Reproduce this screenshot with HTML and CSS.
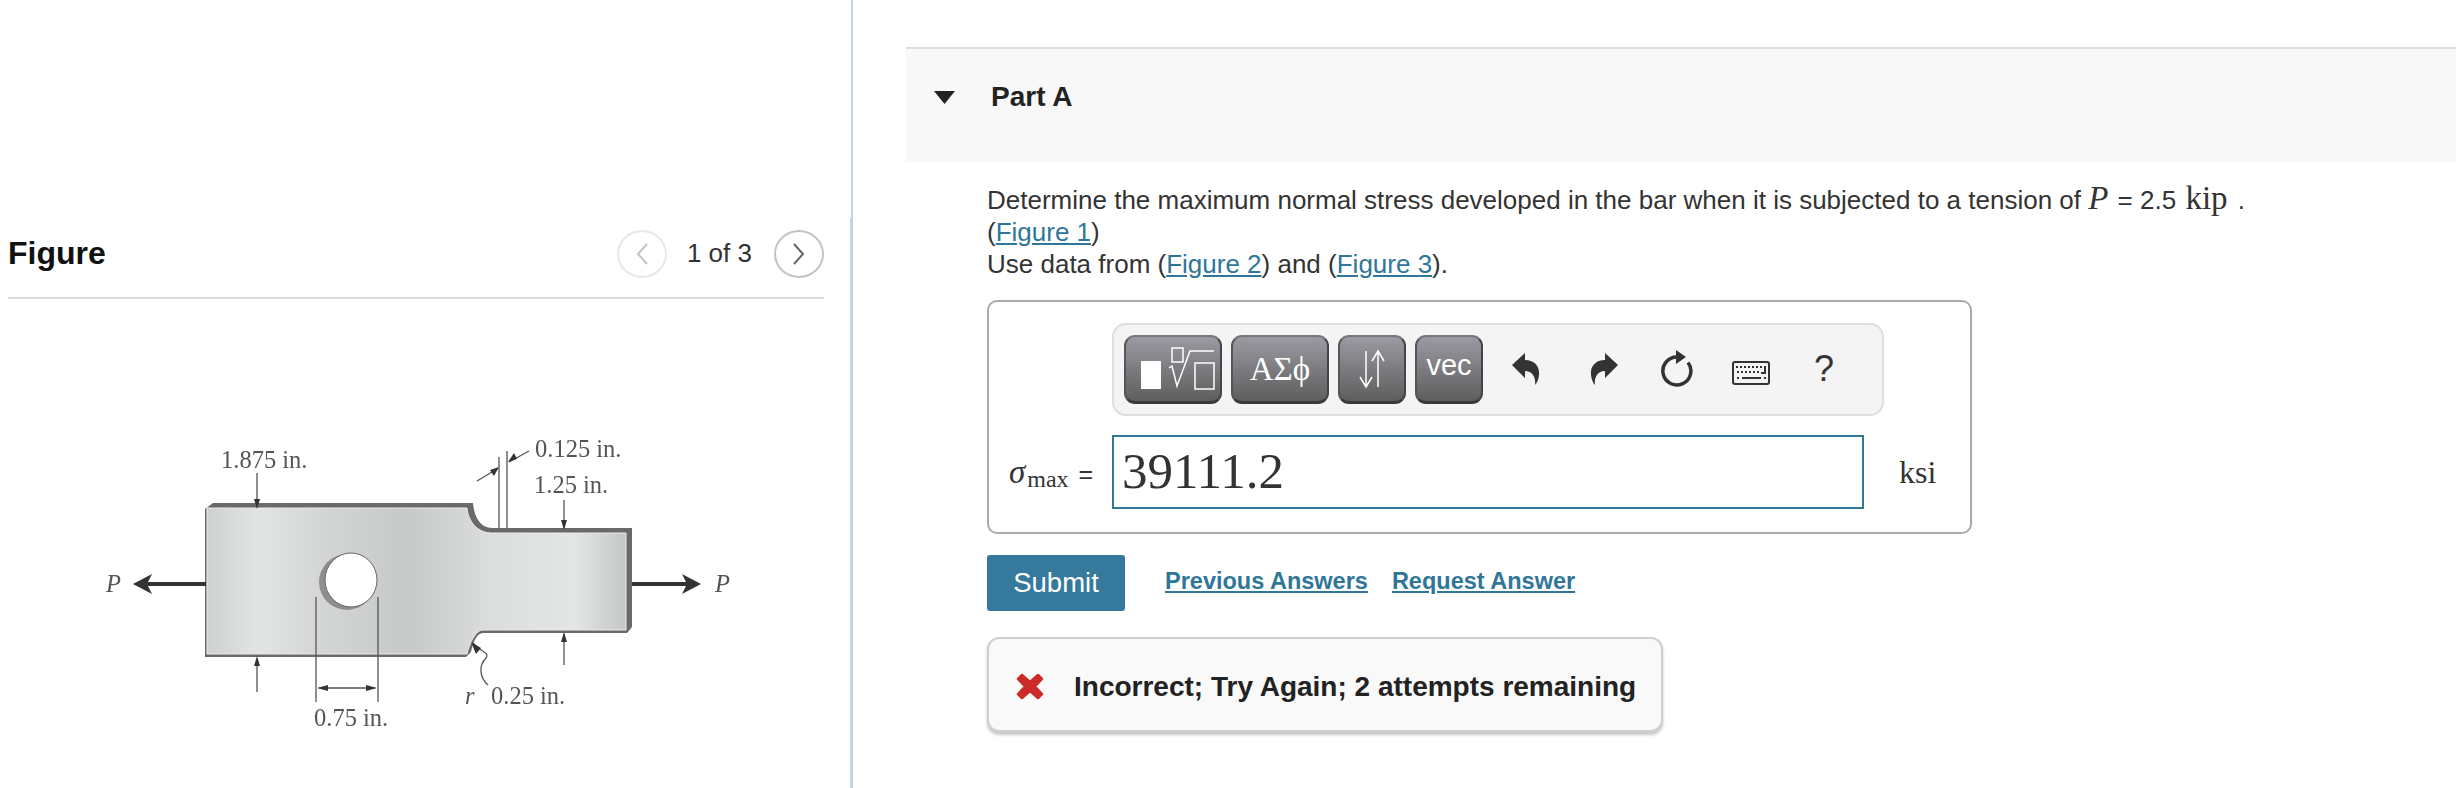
FILE: index.html
```html
<!DOCTYPE html>
<html lang="en">
<head>
<meta charset="utf-8">
<title>Part A</title>
<link rel="stylesheet" href="styles.css">
</head>
<body>
<div class="page">
  <section class="figure-pane">
    <header class="figure-head">
      <h2 class="figure-title">Figure</h2>
      <div class="pager">
        <span class="pager-btn pager-off"><svg width="14" height="24" viewBox="0 0 14 24"><path d="M12 2 L3 12 L12 22" fill="none" stroke="#c4c4c4" stroke-width="2"/></svg></span>
        <span class="pager-count">1 of 3</span>
        <span class="pager-btn"><svg width="14" height="24" viewBox="0 0 14 24"><path d="M2 2 L11 12 L2 22" fill="none" stroke="#666" stroke-width="2"/></svg></span>
      </div>
    </header>
    <svg class="diagram" width="700" height="340" viewBox="0 0 700 340">
      <defs>
        <linearGradient id="steel" x1="0" x2="1" y1="0" y2="0">
          <stop offset="0" stop-color="#cfd1d1"/>
          <stop offset=".12" stop-color="#e2e4e4"/>
          <stop offset=".3" stop-color="#d2d4d4"/>
          <stop offset=".48" stop-color="#c6c8c9"/>
          <stop offset=".68" stop-color="#dcdede"/>
          <stop offset=".88" stop-color="#e4e5e5"/>
          <stop offset="1" stop-color="#c4c6c6"/>
        </linearGradient>
      </defs>
      <path d="M133 83 H393 C394 96 400 108 412 108 H552 V207 L547 213 H403 C397 213 393 222 391 232 L386 237 H125 V89 Z" fill="#6a6a6a"/>
      <path d="M127 88 H387 C388 100 396 113 412 113 H546 V210 H403 C396 210 390 222 387 234 H127 Z" fill="url(#steel)" stroke="#ececec" stroke-width="1"/>
      <ellipse cx="267" cy="162" rx="28" ry="28" fill="#8e8e8e"/>
      <ellipse cx="271" cy="160" rx="26" ry="27" fill="#fff" stroke="#666" stroke-width="1"/>
      <g class="dim">
        <path d="M177 53 V87 M177 272 V240 M484 80 V108 M484 245 V214"/>
        <path d="M419 37 V108 M427 31 V108 M397 61 L417 49 M449 31 L429 42"/>
        <path d="M236 177 V282 M298 177 V282 M239 268 H295"/>
        <path d="M393 223 C400 232 410 232 406 238 C398 246 400 258 408 265"/>
      </g>
      <g class="tips">
        <path d="M177 89 L174 79 H180 Z M177 236 L174 246 H180 Z M484 110 L481 100 H487 Z M484 212 L481 222 H487 Z"/>
        <path d="M419 47 L410 50 L414 56 Z M428 42 L437 39 L434 33 Z"/>
        <path d="M237 268 L248 265 V271 Z M297 268 L286 265 V271 Z M391 222 L401 228 L396 234 Z"/>
        <path d="M53 164 L72 154 L68 162 H126 V166 H68 L72 174 Z"/>
        <path d="M621 164 L602 154 L606 162 H552 V166 H606 L602 174 Z"/>
      </g>
      <text class="dia-label" x="141" y="48">1.875 in.</text>
      <text class="dia-label" x="455" y="37">0.125 in.</text>
      <text class="dia-label" x="454" y="73">1.25 in.</text>
      <text class="dia-label dia-italic" x="26" y="172">P</text>
      <text class="dia-label dia-italic" x="635" y="172">P</text>
      <text class="dia-label dia-italic" x="385" y="284">r</text>
      <text class="dia-label" x="411" y="284">0.25 in.</text>
      <text class="dia-label" x="234" y="306">0.75 in.</text>
    </svg>
  </section>

  <div class="divider"><div class="divider-thin"></div><div class="divider-thick"></div></div>

  <main class="part-pane">
    <header class="part-head">
      <svg class="caret" width="21" height="13" viewBox="0 0 21 13"><path d="M0 0 H21 L10.5 13 Z" fill="#222"/></svg>
      <h3 class="part-title">Part A</h3>
    </header>
    <div class="part-body">
      <p class="prompt">Determine the maximum normal stress developed in the bar when it is subjected to a tension of <span class="m-var">P</span> = 2.5 <span class="m-unit">kip</span> .<br>
      (<a href="#">Figure 1</a>)<br>
      Use data from (<a href="#">Figure 2</a>) and (<a href="#">Figure 3</a>).</p>

      <div class="answer-box">
        <div class="toolbar">
          <div class="tool-group">
            <span class="tool tool-wide tool-math">
              <svg width="74" height="46" viewBox="0 0 74 46"><rect x="0" y="15" width="20" height="28" fill="#fff"/><g fill="none" stroke="#fff" stroke-width="1.5"><rect x="31" y="2" width="11" height="14"/><path d="M28 22 L31 20 L36 40 L49 5 H73"/><rect x="54" y="17" width="19" height="26"/></g></svg>
            </span>
            <span class="tool tool-wide tool-greek">ΑΣϕ</span>
            <span class="tool tool-mid">
              <svg width="30" height="40" viewBox="0 0 30 40"><g fill="none" stroke="#fff" stroke-width="1.5"><path d="M9 2 V38 M3 28 L9 38 L15 28"/><path d="M21 38 V2 M15 12 L21 2 L27 12"/></g></svg>
            </span>
            <span class="tool tool-mid tool-vec">vec</span>
          </div>
          <div class="tool-actions">
            <svg class="act" width="28" height="32" viewBox="0 0 28 32"><path d="M0 12 L13 0 V7 C22 7 28 13 27 22 C26.6 26 25 30 23 32 C24 25 21 18 13 18 V25 Z" fill="#333"/></svg>
            <svg class="act" width="28" height="32" viewBox="0 0 28 32"><path d="M28 12 L15 0 V7 C6 7 0 13 1 22 C1.400 26 3 30 5 32 C4 25 7 18 15 18 V25 Z" fill="#333"/></svg>
            <svg class="act" width="32" height="37" viewBox="0 0 32 37"><path d="M16 7 A14 14 0 1 0 27 12.500" fill="none" stroke="#333" stroke-width="3.500"/><path d="M15 0 L25 7 L15 14 Z" fill="#333"/></svg>
            <svg class="act act-key" width="38" height="24" viewBox="0 0 38 24"><rect x="1" y="1" width="36" height="22" rx="2" fill="#f4f4f4" stroke="#333" stroke-width="2"/><g fill="#333"><rect x="4" y="5" width="2" height="2"/><rect x="8" y="5" width="2" height="2"/><rect x="12" y="5" width="2" height="2"/><rect x="16" y="5" width="2" height="2"/><rect x="20" y="5" width="2" height="2"/><rect x="24" y="5" width="2" height="2"/><rect x="28" y="5" width="2" height="2"/><rect x="32" y="5" width="2" height="8"/><rect x="5" y="10" width="2" height="2"/><rect x="9" y="10" width="2" height="2"/><rect x="13" y="10" width="2" height="2"/><rect x="17" y="10" width="2" height="2"/><rect x="21" y="10" width="2" height="2"/><rect x="25" y="10" width="2" height="2"/><rect x="29" y="11" width="5" height="2"/><rect x="5" y="16" width="2" height="2"/><rect x="10" y="16" width="19" height="2"/><rect x="32" y="16" width="2" height="2"/></g></svg>
            <span class="help">?</span>
          </div>
        </div>
        <div class="answer-row">
          <span class="lhs"><span class="m-sigma">σ</span><span class="m-sub">max</span><span class="m-eq">=</span></span>
          <div class="answer-input">39111.2</div>
          <span class="unit">ksi</span>
        </div>
      </div>

      <div class="actions">
        <button class="submit" type="button">Submit</button>
        <a class="act-link" href="#">Previous Answers</a>
        <a class="act-link" href="#">Request Answer</a>
      </div>

      <div class="feedback">
        <svg width="28" height="27" viewBox="0 0 28 27"><path d="M6 2 L14 9 L22 2 L26 6 L19 13.500 L26 21 L22 25 L14 18 L6 25 L2 21 L9 13.500 L2 6 Z" fill="#cd2a2a" stroke="#cd2a2a" stroke-width="2.500" stroke-linejoin="round"/></svg>
        <span class="feedback-text">Incorrect; Try Again; 2 attempts remaining</span>
      </div>
    </div>
  </main>
</div>
</body>
</html>
```

FILE: styles.css
```css
* { box-sizing: border-box; }
html, body { margin: 0; padding: 0; background: #fff; }
body { height: 788px; overflow: hidden; font-family: "Liberation Sans", Arial, sans-serif; color: #333; }

.page { display: grid; grid-template-columns: 850px 3px 1fr; height: 788px; }

/* figure pane */
.figure-pane { padding: 228px 26px 0 8px; display: flex; flex-direction: column; align-items: stretch; }
.figure-head { display: flex; align-items: center; justify-content: space-between; height: 71px; padding-bottom: 18px; border-bottom: 2px solid #dddddd; }
.figure-title { margin: 0; font-size: 32px; font-weight: 700; color: #111; }
.pager { display: flex; align-items: center; gap: 20px; }
.pager-count { margin-right: 2px; font-size: 26px; color: #333; }
.pager-btn { width: 50px; height: 48px; border: 2px solid #c4c4c4; border-radius: 50%; display: flex; align-items: center; justify-content: center; }
.pager-off { border-color: #e8e8e8; }
.diagram { display: block; margin: 121px 0 0 72px; filter: blur(.6px); }
.dim { fill: none; stroke: #555; stroke-width: 1.300; }
.tips { fill: #333; }
.dia-label { font-family: "Liberation Serif", serif; font-size: 24.500px; fill: #555; }
.dia-italic { font-style: italic; }

/* divider */
.divider { display: flex; flex-direction: column; }
.divider-thin { height: 218px; width: 2px; margin-left: 1px; background: #c5d3e6; }
.divider-thick { flex: 1; width: 3px; background: #c5d3e6; }

/* part pane */
.part-pane { padding: 47px 0 0 53px; }
.part-head { display: flex; align-items: center; height: 115px; padding: 0 0 17px 28px; background: #f8f8f8; border-top: 2px solid #dddddd; }
.caret { display: block; }
.part-title { margin: 0 0 0 36px; font-size: 28px; font-weight: 700; color: #222; }
.part-body { padding: 22px 0 0 81px; }
.prompt { margin: 0; font-size: 26px; line-height: 32px; color: #333; }
.prompt a { color: #2f7699; text-decoration: underline; }
.m-var { margin-right: 2px; font-family: "Liberation Serif", serif; font-style: italic; font-size: 33px; line-height: 20px; }
.m-unit { margin: 0 3px 0 2px; font-family: "Liberation Serif", serif; font-size: 33px; line-height: 20px; }

.answer-box { width: 985px; height: 234px; margin-top: 20px; padding: 21px 0 0 0; border: 2px solid #aaaaaa; border-radius: 10px; }
.toolbar { width: 772px; height: 93px; margin-left: 123px; padding: 10px 0 0 10px; display: flex; background: #f4f4f4; border: 2px solid #dfdfdf; border-radius: 14px; }
.tool-group { display: flex; gap: 9px; height: 69px; }
.tool { display: flex; align-items: center; justify-content: center; height: 69px; color: #fff; border: 2px solid #3a3a3a; border-top-color: #77777d; border-left-color: #55555a; border-right-color: #44444a; border-bottom-width: 3px; border-radius: 11px; background: linear-gradient(#9a9aa2, #5e5e5e); }
.tool-wide { width: 98px; }
.tool-mid { width: 68px; }
.tool-math { padding-left: 9px; }
.tool-greek { font-family: "Liberation Serif", serif; font-size: 33px; }
.tool-vec { font-size: 29px; padding-bottom: 8px; }
.tool-actions { display: flex; align-items: flex-start; margin-left: 29px; }
.act { display: block; margin-top: 18px; }
.act:nth-child(2) { margin-left: 50px; }
.act:nth-child(3) { margin-left: 43px; margin-top: 15px; }
.act-key { margin-left: 39px; margin-top: 26px; }
.help { margin-left: 44px; margin-top: 14px; font-size: 36px; line-height: 40px; color: #333; }

.answer-row { display: flex; align-items: center; height: 74px; margin-top: 19px; }
.lhs { display: flex; align-items: baseline; width: 123px; padding-left: 20px; font-family: "Liberation Serif", serif; }
.m-sigma { font-style: italic; font-size: 33px; }
.m-sub { margin-left: 2px; font-size: 24px; position: relative; top: 4px; }
.m-eq { margin-left: 10px; font-family: "Liberation Sans", sans-serif; font-size: 25px; }
.answer-input { width: 752px; height: 74px; padding-left: 8px; font-family: "Liberation Serif", serif; font-size: 51px; line-height: 68px; color: #333; border: 2px solid #33779b; }
.unit { margin-left: 35px; font-family: "Liberation Serif", serif; font-size: 32px; color: #333; }

.actions { display: flex; align-items: center; margin-top: 21px; height: 56px; }
.submit { width: 138px; height: 56px; padding: 0; font-family: inherit; font-size: 27.500px; color: #fff; background: #35799c; border: 0; border-radius: 3px; }
.act-link { margin-right: 24px; font-size: 23.500px; font-weight: 700; color: #2f7699; padding-bottom: 4px; }
.submit + .act-link { margin-left: 40px; }

.feedback { display: flex; align-items: center; gap: 30px; width: 676px; height: 95px; margin-top: 26px; padding: 4px 0 0 27px; background: #f9f9f9; border: 2px solid #cfcfcf; border-radius: 12px; box-shadow: 0 3px 3px #c8c8c8; }
.feedback-text { font-size: 28px; font-weight: 700; color: #222; }
```
